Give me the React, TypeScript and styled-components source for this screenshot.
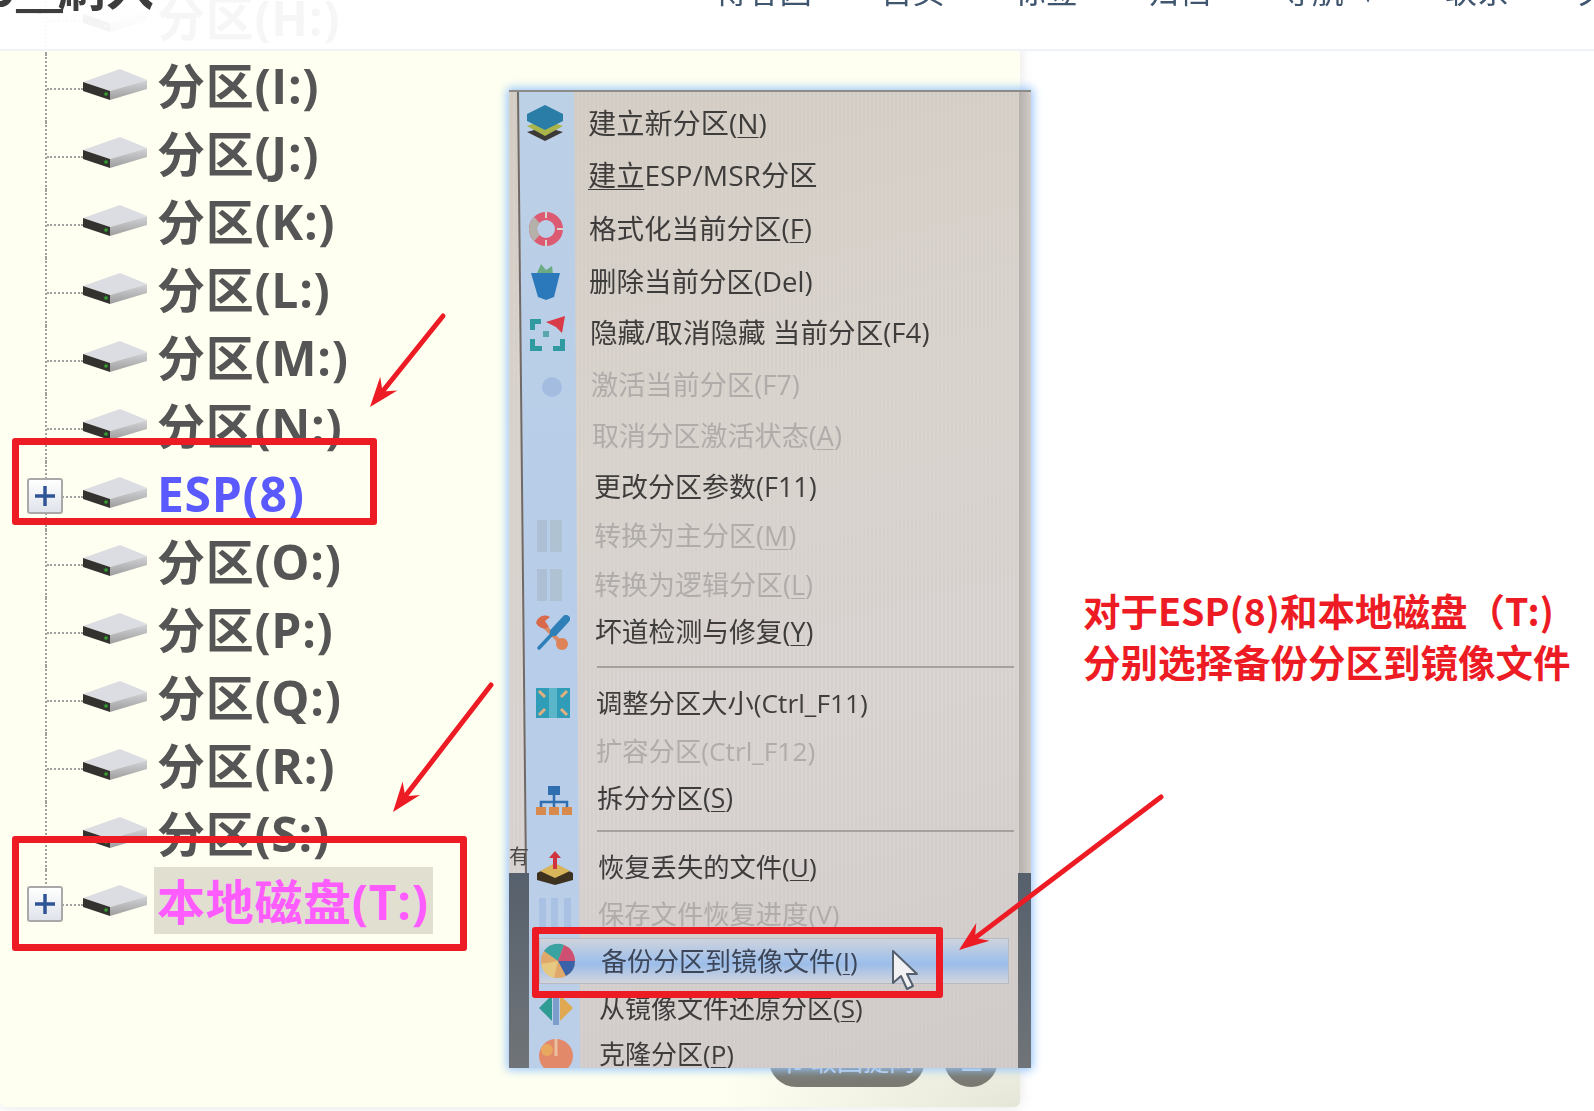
import React from 'react';
import styled, { createGlobalStyle } from 'styled-components';

const CJK = `"Noto Sans CJK SC", "Noto Sans", sans-serif`;
const MIXED = `"Open Sans", "Noto Sans CJK SC", sans-serif`;
const RED = '#ed1c24';

const GlobalStyle = createGlobalStyle`
  html, body { margin: 0; padding: 0; background: #fff; }
  body { font-family: ${CJK}; overflow: hidden; }
`;

const Page = styled.div`
  position: relative;
  display: flex;
  width: 1594px;
  height: 1111px;
  overflow: hidden;
  background: #fff;
`;

const Header = styled.header`
  position: absolute;
  top: 0;
  left: 0;
  right: 0;
  z-index: 5;
  height: 49px;
  display: flex;
  align-items: flex-start;
  justify-content: space-between;
  background: rgba(255, 255, 255, 0.95);
  border-bottom: 2px solid #eff2f7;
`;

const Title = styled.div`
  margin: -47px 0 0 -13px;
  font-size: 48px;
  line-height: 64px;
  font-weight: 700;
  color: #3d3d3d;
  white-space: nowrap;
`;

const TitleRule = styled.span`
  letter-spacing: -6px;
`;

const Nav = styled.nav`
  display: flex;
  gap: 69px;
  margin: -31px -48px 0 0;
  font-size: 32px;
  line-height: 40px;
  word-spacing: 9px;
  color: #40566e;
  white-space: nowrap;
`;

const Panel = styled.main`
  position: relative;
  flex: 0 0 1020px;
  height: 1107px;
  overflow: visible;
  border-radius: 0 0 6px 6px;
  background: radial-gradient(ellipse 300px 120px at 100% 100%, #e6e6d8 0%, #fefff0 100%), #fefff0;
  box-shadow: 0 0 14px rgba(0, 0, 0, 0.11);
`;

const Tree = styled.ul`
  list-style: none;
  margin: -14px 0 0;
  padding: 0;
  filter: blur(0.45px);
`;

const TreeRow = styled.li<{ $last?: boolean }>`
  position: relative;
  display: flex;
  align-items: center;
  height: 68px;
  padding-left: 83px;

  &::before {
    content: '';
    position: absolute;
    left: 45px;
    top: 0;
    height: ${({ $last }) => ($last ? '50%' : '100%')};
    border-left: 2px dotted #a0a0a0;
  }

  &::after {
    content: '';
    position: absolute;
    left: 47px;
    width: 36px;
    top: 50%;
    border-top: 2px dotted #a0a0a0;
  }
`;

const Expander = styled.span`
  position: absolute;
  z-index: 1;
  left: 27px;
  top: 16px;
  width: 36px;
  height: 36px;
  box-sizing: border-box;
  display: flex;
  align-items: center;
  justify-content: center;
  border: 2px solid #a9a9a9;
  border-radius: 3px;
  background: linear-gradient(#ffffff, #dfe3ea);
`;

const DriveIcon = styled.svg`
  flex: none;
  margin-top: -6px;
`;

const TreeLabel = styled.span<{ $color?: string; $selected?: boolean }>`
  margin: ${({ $selected }) => ($selected ? '0 0 7px 6px' : '0 0 5px 9px')};
  padding: ${({ $selected }) => ($selected ? '0 4px 0 3px' : '0')};
  height: ${({ $selected }) => ($selected ? '67px' : 'auto')};
  font-family: ${MIXED};
  font-size: 48px;
  letter-spacing: 0.7px;
  line-height: ${({ $selected }) => ($selected ? '70px' : '60px')};
  font-weight: 700;
  color: ${({ $color }) => $color || '#555'};
  background: ${({ $selected }) => ($selected ? '#e0dfd0' : 'transparent')};
  white-space: nowrap;
`;

const PillGroup = styled.div`
  position: absolute;
  left: 769px;
  top: 1033px;
  display: flex;
  gap: 19px;
`;

const Pill = styled.div<{ $round?: boolean }>`
  width: ${({ $round }) => ($round ? '54px' : '156px')};
  height: 54px;
  border-radius: 27px;
  background: #7a7a72;
  color: #c5d5ea;
  font-size: 26px;
  line-height: 54px;
  text-align: center;
  white-space: nowrap;
`;

const Menu = styled.section`
  position: absolute;
  z-index: 2;
  left: 509px;
  top: 90px;
  width: 522px;
  height: 978px;
  overflow: hidden;
  background:
    repeating-linear-gradient(90deg, rgba(255, 255, 255, 0.05) 0 2px, rgba(0, 0, 0, 0.012) 2px 4px),
    linear-gradient(165deg, #d4cdc4 0%, #d9d3cd 35%, #d8d2d1 65%, #d0cac8 100%);
  border-top: 2px solid #8e8c88;
  box-sizing: border-box;
  box-shadow: 0 0 9px 2px #98c6fb;
`;

const IconStrip = styled.div`
  position: absolute;
  inset: 0;
  background: linear-gradient(180deg, #bcd0e6 0%, #b7cde9 55%, #bccfe8 100%);
  clip-path: polygon(10px 0, 65px 0, 71px 100%, 20px 100%);
`;

const StripEdge = styled.div`
  position: absolute;
  inset: 0;
  background: #6f6a68;
  clip-path: polygon(8px 0, 10px 0, 20px 100%, 18px 100%);
`;

const RightEdge = styled.div`
  position: absolute;
  top: 0;
  right: 0;
  bottom: 0;
  width: 12px;
  background: linear-gradient(90deg, #b4b0ac, #d2ccc8);
`;

const DarkCorner = styled.div<{ $side: 'left' | 'right' }>`
  position: absolute;
  bottom: 0;
  top: 781px;
  ${({ $side }) => ($side === 'left' ? 'left: 0; width: 20px;' : 'right: 0; width: 13px;')}
  background: linear-gradient(#56606c, #707478);
`;

const BackText = styled.div`
  position: absolute;
  left: 0;
  top: 752px;
  width: 20px;
  overflow: hidden;
  font-size: 20px;
  line-height: 24px;
  color: #4c4a48;
  white-space: nowrap;
`;

const MenuList = styled.div`
  position: relative;
  display: flex;
  flex-direction: column;
  padding-top: 5px;
  font-family: ${MIXED};
  filter: blur(0.6px);
`;

const MenuRow = styled.div<{ $h: number; $indent: number; $active?: boolean; $size: number; $off?: boolean }>`
  flex: none;
  display: flex;
  align-items: center;
  gap: 25px;
  height: ${({ $h }) => $h}px;
  box-sizing: border-box;
  margin-left: ${({ $indent }) => $indent}px;
  font-size: ${({ $size }) => $size}px;
  line-height: 1;
  white-space: nowrap;
  color: ${({ $off }) => ($off ? '#b0acaa' : '#3f3d3c')};
  ${({ $active }) =>
    $active &&
    `
    margin-top: 5px;
    margin-right: 22px;
    color: #3c4658;
    border: 1px solid #b6bac2;
    background: linear-gradient(180deg, #cfd3dc 0%, #a2c1ea 48%, #9dbde8 58%, #d2d5dd 100%);
  `}
`;

const MenuIcon = styled.svg<{ $off?: boolean }>`
  flex: none;
  width: 36px;
  height: 36px;
  opacity: ${({ $off }) => ($off ? 0.28 : 1)};
`;

const IconGap = styled.span`
  flex: none;
  width: 36px;
`;

const Mnemonic = styled.span`
  text-decoration: underline;
  text-underline-offset: 3px;
  text-decoration-thickness: 1px;
`;

const MenuSeparator = styled.div<{ $h: number }>`
  flex: none;
  height: ${({ $h }) => $h}px;
  display: flex;
  align-items: center;
  margin: 0 17px 0 88px;

  &::before {
    content: '';
    flex: 1;
    border-top: 2px solid #a5a19d;
  }
`;

const CursorIcon = styled.svg`
  position: absolute;
  left: 382px;
  top: 858px;
  filter: blur(0.5px);
`;

const RedBox = styled.div<{ $x: number; $y: number; $w: number; $h: number }>`
  position: absolute;
  z-index: 3;
  left: ${({ $x }) => $x}px;
  top: ${({ $y }) => $y}px;
  width: ${({ $w }) => $w}px;
  height: ${({ $h }) => $h}px;
  box-sizing: border-box;
  border: 7px solid ${RED};
  border-radius: 3px;
`;

const ArrowSvg = styled.svg`
  position: absolute;
  z-index: 3;
  left: 0;
  top: 0;
  overflow: visible;
  pointer-events: none;
`;

const Side = styled.aside`
  flex: 1;
  padding: 584px 0 0 63px;
  font-size: 37.5px;
  line-height: 51px;
  font-weight: 700;
  color: ${RED};
  white-space: nowrap;
`;

// arrow from (x1,y1) tail to (x2,y2) tip, swept head like the annotation tool
const Arrow = ({ x1, y1, x2, y2 }: { x1: number; y1: number; x2: number; y2: number }) => {
  const a = Math.atan2(y2 - y1, x2 - x1);
  const ux = Math.cos(a);
  const uy = Math.sin(a);
  const at = (back: number, side: number) =>
    `${x2 - ux * back - uy * side},${y2 - uy * back + ux * side}`;
  return (
    <ArrowSvg width="1">
      <line x1={x1} y1={y1} x2={x2 - ux * 18} y2={y2 - uy * 18} stroke={RED} strokeWidth="5" strokeLinecap="round" />
      <polygon points={`${x2},${y2} ${at(30, 11)} ${at(20, 0)} ${at(30, -11)}`} fill={RED} />
    </ArrowSvg>
  );
};

const Drive = () => (
  <DriveIcon width="65" height="32" viewBox="0 0 65 32">
    <defs>
      <linearGradient id="driveSide" x1="0" y1="0" x2="0" y2="1">
        <stop offset="0" stopColor="#d3d4d8" />
        <stop offset="1" stopColor="#9d9d9d" />
      </linearGradient>
    </defs>
    <polygon points="0,13 37,0 64,11 27,22" fill="#dcdde2" />
    <polygon points="27,22 64,11 64,20 27,31" fill="url(#driveSide)" />
    <polygon points="0,13 27,22 27,31 0,22" fill="#33322f" />
    <circle cx="23" cy="25" r="1.8" fill="#2fa52f" />
  </DriveIcon>
);

const PlusGlyph = () => (
  <svg width="22" height="22" viewBox="0 0 22 22">
    <path d="M11 1v20M1 11h20" stroke="#2f5597" strokeWidth="3.5" />
  </svg>
);

const LayersIcon = () => (
  <MenuIcon viewBox="0 0 36 36">
    <polygon points="18,22 36,27 18,36 0,27" fill="#3b3a36" />
    <polygon points="18,15 36,21 18,31 0,21" fill="#a9b54a" />
    <polygon points="18,0 36,9 36,16 18,25 0,16 0,9" fill="#2a7da6" />
  </MenuIcon>
);

const RingIcon = () => (
  <MenuIcon viewBox="0 0 36 36">
    <circle cx="18" cy="18" r="13" fill="none" stroke="#dc5a72" strokeWidth="8" />
    <path d="M5 18a13 13 0 0 1 4-9M5 18a13 13 0 0 0 4 9" fill="none" stroke="#b5b0aa" strokeWidth="8" />
    <path d="M18 1v6M35 18h-6M18 35v-6" stroke="#d9d3cd" strokeWidth="2" />
  </MenuIcon>
);

const BucketIcon = () => (
  <MenuIcon viewBox="0 0 36 36">
    <path d="M9 9l4-9 5 6 6-4 1 8z" fill="#6cab83" />
    <polygon points="3,9 32,9 26,33 18,36 10,33" fill="#2b79bb" />
  </MenuIcon>
);

const SquaresIcon = () => (
  <MenuIcon viewBox="0 0 36 36">
    <path d="M1 4h11v5H6v6H1zM1 24h5v7h7v5H1zM24 31h7v-7h5v12H24z" fill="#2f9aa0" />
    <polygon points="17,7 36,1 33,18 27,12" fill="#d83a48" />
    <rect x="14" y="16" width="6" height="6" fill="#58a7ad" />
  </MenuIcon>
);

const DotIcon = () => (
  <MenuIcon $off viewBox="0 0 36 36">
    <circle cx="22" cy="20" r="10" fill="#6d8fd0" />
  </MenuIcon>
);

const BlocksIcon = () => (
  <MenuIcon $off viewBox="0 0 36 36">
    <rect x="4" y="2" width="10" height="32" fill="#8f9aa0" />
    <rect x="17" y="2" width="12" height="32" fill="#9aa69a" />
  </MenuIcon>
);

const ToolsIcon = () => (
  <MenuIcon viewBox="0 0 36 36">
    <path d="M8 9l20 20" stroke="#d98a66" strokeWidth="4" />
    <path d="M2 8a9 9 0 0 0 13 4l-4-6 5-4a9 9 0 0 0-14 6z" fill="#d9694b" />
    <path d="M32 4L20 17" stroke="#2f7fb8" strokeWidth="8" strokeLinecap="round" />
    <path d="M20 17L5 33" stroke="#2f7fb8" strokeWidth="3.5" strokeLinecap="round" />
    <circle cx="28" cy="29" r="6" fill="#de8258" />
  </MenuIcon>
);

const ResizeIcon = () => (
  <MenuIcon viewBox="0 0 36 36">
    <rect x="1" y="3" width="34" height="30" fill="#2f9db8" />
    <rect x="14" y="3" width="8" height="30" fill="#5ab6c8" />
    <path d="M4 6l6 6M32 6l-6 6M4 30l6-6M32 30l-6-6" stroke="#e0b080" strokeWidth="3" />
  </MenuIcon>
);

const OrgIcon = () => (
  <MenuIcon viewBox="0 0 36 36">
    <rect x="12" y="5" width="12" height="9" fill="#2f6fb0" />
    <path d="M18 14v7M5 27v-6h26v6M18 21v6" fill="none" stroke="#2f6fb0" strokeWidth="2.5" />
    <rect x="0" y="26" width="10" height="8" fill="#d88a4c" />
    <rect x="13" y="26" width="10" height="8" fill="#d88a4c" />
    <rect x="26" y="26" width="10" height="8" fill="#d88a4c" />
  </MenuIcon>
);

const ChestIcon = () => (
  <MenuIcon viewBox="0 0 36 36">
    <polygon points="0,24 18,15 36,24 36,31 18,36 0,31" fill="#3d3220" />
    <polygon points="3,22 18,14 33,22 18,29" fill="#d8b45a" />
    <path d="M18 2l6 7h-4v11h-4V9h-4z" fill="#cf3340" />
  </MenuIcon>
);

const BarsIcon = () => (
  <MenuIcon $off viewBox="0 0 36 36">
    <rect x="2" y="2" width="7" height="32" fill="#7da0d8" />
    <rect x="14" y="2" width="7" height="32" fill="#7da0d8" />
    <rect x="27" y="2" width="7" height="32" fill="#7da0d8" />
  </MenuIcon>
);

const PieIcon = () => (
  <MenuIcon viewBox="0 0 36 36">
    <circle cx="18" cy="18" r="17" fill="#e0a86a" />
    <path d="M18 18L4 8a17 17 0 0 1 20-6z" fill="#3aa2a0" />
    <path d="M18 18L24 2a17 17 0 0 1 11 16z" fill="#cf4f72" />
    <path d="M18 18h17a17 17 0 0 1-9 15z" fill="#3a62a8" />
    <path d="M18 18l-4 17a17 17 0 0 1-13-14z" fill="#e6c880" />
  </MenuIcon>
);

const SplitIcon = () => (
  <MenuIcon viewBox="0 0 36 36">
    <polygon points="14,5 14,31 1,18" fill="#2f9c94" />
    <polygon points="22,5 22,31 35,18" fill="#e0a850" />
    <rect x="15" y="1" width="6" height="34" fill="#7d9dca" />
  </MenuIcon>
);

const CloneIcon = () => (
  <MenuIcon viewBox="0 0 36 36">
    <circle cx="18" cy="20" r="17" fill="#e2896a" />
    <path d="M18 3v17" stroke="#eac0a0" strokeWidth="3" />
    <circle cx="9" cy="14" r="6" fill="#e8a860" />
  </MenuIcon>
);

type Part = { text: string; mark?: boolean };

interface MenuEntry {
  parts: Part[];
  h: number;
  indent: number;
  size: number;
  off?: boolean;
  active?: boolean;
  icon?: React.ReactNode;
  sep?: boolean;
}

const mk = (text: string, key?: string): Part[] =>
  key ? [{ text }, { text: '(' }, { text: key, mark: true }, { text: ')' }] : [{ text }];

const menuEntries: MenuEntry[] = [
  { parts: mk('建立新分区', 'N'), h: 52, indent: 18, size: 28.2, icon: <LayersIcon /> },
  { parts: [{ text: '建立', mark: true }, { text: 'ESP/MSR分区' }], h: 53, indent: 18, size: 28.2 },
  { parts: mk('格式化当前分区', 'F'), h: 54, indent: 19, size: 27.5, icon: <RingIcon /> },
  { parts: mk('删除当前分区(Del)'), h: 51, indent: 19, size: 27.5, icon: <BucketIcon /> },
  { parts: mk('隐藏/取消隐藏 当前分区(F4)'), h: 52, indent: 20, size: 27.6, icon: <SquaresIcon /> },
  { parts: mk('激活当前分区(F7)'), h: 51, indent: 21, size: 27.2, off: true, icon: <DotIcon /> },
  { parts: mk('取消分区激活状态', 'A'), h: 51, indent: 22, size: 27.1, off: true },
  { parts: mk('更改分区参数(F11)'), h: 50, indent: 24, size: 27 },
  { parts: mk('转换为主分区', 'M'), h: 49, indent: 24, size: 27, off: true, icon: <BlocksIcon /> },
  { parts: mk('转换为逻辑分区', 'L'), h: 49, indent: 24, size: 27, off: true, icon: <BlocksIcon /> },
  { parts: mk('坏道检测与修复', 'Y'), h: 47, indent: 25, size: 26.8, icon: <ToolsIcon /> },
  { parts: [], h: 22, indent: 0, size: 0, sep: true },
  { parts: mk('调整分区大小(Ctrl_F11)'), h: 50, indent: 26, size: 26.3, icon: <ResizeIcon /> },
  { parts: mk('扩容分区(Ctrl_F12)'), h: 46, indent: 26, size: 26.3, off: true },
  { parts: mk('拆分分区', 'S'), h: 49, indent: 27, size: 26.5, icon: <OrgIcon /> },
  { parts: [], h: 16, indent: 0, size: 0, sep: true },
  { parts: mk('恢复丢失的文件', 'U'), h: 56, indent: 28, size: 26.3, icon: <ChestIcon /> },
  { parts: mk('保存文件恢复进度', 'V'), h: 38, indent: 28, size: 26.3, off: true, icon: <BarsIcon /> },
  { parts: mk('备份分区到镜像文件', 'I'), h: 46, indent: 30, size: 26, active: true, icon: <PieIcon /> },
  { parts: mk('从镜像文件还原分区', 'S'), h: 48, indent: 29, size: 26, icon: <SplitIcon /> },
  { parts: mk('克隆分区', 'P'), h: 44, indent: 29, size: 26, icon: <CloneIcon /> },
];

const treeRows = [
  { label: '分区(H:)' },
  { label: '分区(I:)' },
  { label: '分区(J:)' },
  { label: '分区(K:)' },
  { label: '分区(L:)' },
  { label: '分区(M:)' },
  { label: '分区(N:)' },
  { label: 'ESP(8)', color: '#5a5aff', expand: true },
  { label: '分区(O:)' },
  { label: '分区(P:)' },
  { label: '分区(Q:)' },
  { label: '分区(R:)' },
  { label: '分区(S:)' },
  { label: '本地磁盘(T:)', color: '#ff5cff', expand: true, selected: true, last: true },
];

const navItems = ['博客园', '首页', '标签', '归档', '导航 ▾', '联系', '关于'];

export default function App() {
  return (
    <Page>
      <GlobalStyle />
      <Header>
        <Title>
          5<TitleRule>__</TitleRule>刷入
        </Title>
        <Nav>
          {navItems.map((item) => (
            <span key={item}>{item}</span>
          ))}
        </Nav>
      </Header>

      <Panel>
        <Tree>
          {treeRows.map((row) => (
            <TreeRow key={row.label} $last={row.last}>
              {row.expand && (
                <Expander>
                  <PlusGlyph />
                </Expander>
              )}
              <Drive />
              <TreeLabel $color={row.color} $selected={row.selected}>
                {row.label}
              </TreeLabel>
            </TreeRow>
          ))}
        </Tree>

        <PillGroup>
          <Pill>节 取回提问</Pill>
          <Pill $round>☰</Pill>
        </PillGroup>

        <Menu>
          <IconStrip />
          <StripEdge />
          <RightEdge />
          <DarkCorner $side="left" />
          <DarkCorner $side="right" />
          <BackText>有P</BackText>
          <MenuList>
            {menuEntries.map((entry, i) =>
              entry.sep ? (
                <MenuSeparator key={i} $h={entry.h} />
              ) : (
                <MenuRow
                  key={i}
                  $h={entry.h}
                  $indent={entry.indent}
                  $size={entry.size}
                  $off={entry.off}
                  $active={entry.active}
                >
                  {entry.icon || <IconGap />}
                  <span>
                    {entry.parts.map((p, j) =>
                      p.mark ? <Mnemonic key={j}>{p.text}</Mnemonic> : <span key={j}>{p.text}</span>
                    )}
                  </span>
                </MenuRow>
              )
            )}
          </MenuList>
          <CursorIcon width="28" height="40" viewBox="0 0 28 40">
            <path d="M2 1v32l8-7 6 13 6-3-6-12h10z" fill="#f1f1f4" stroke="#55606e" strokeWidth="2" strokeLinejoin="round" />
          </CursorIcon>
        </Menu>

        <RedBox $x={12} $y={438} $w={365} $h={87} />
        <RedBox $x={12} $y={836} $w={455} $h={115} />
        <RedBox $x={532} $y={927} $w={411} $h={71} />
        <Arrow x1={443} y1={316} x2={370} y2={407} />
        <Arrow x1={491} y1={685} x2={393} y2={812} />
        <Arrow x1={1161} y1={797} x2={959} y2={950} />
      </Panel>

      <Side>
        <div>对于ESP(8)和本地磁盘（T:)</div>
        <div>分别选择备份分区到镜像文件</div>
      </Side>
    </Page>
  );
}
